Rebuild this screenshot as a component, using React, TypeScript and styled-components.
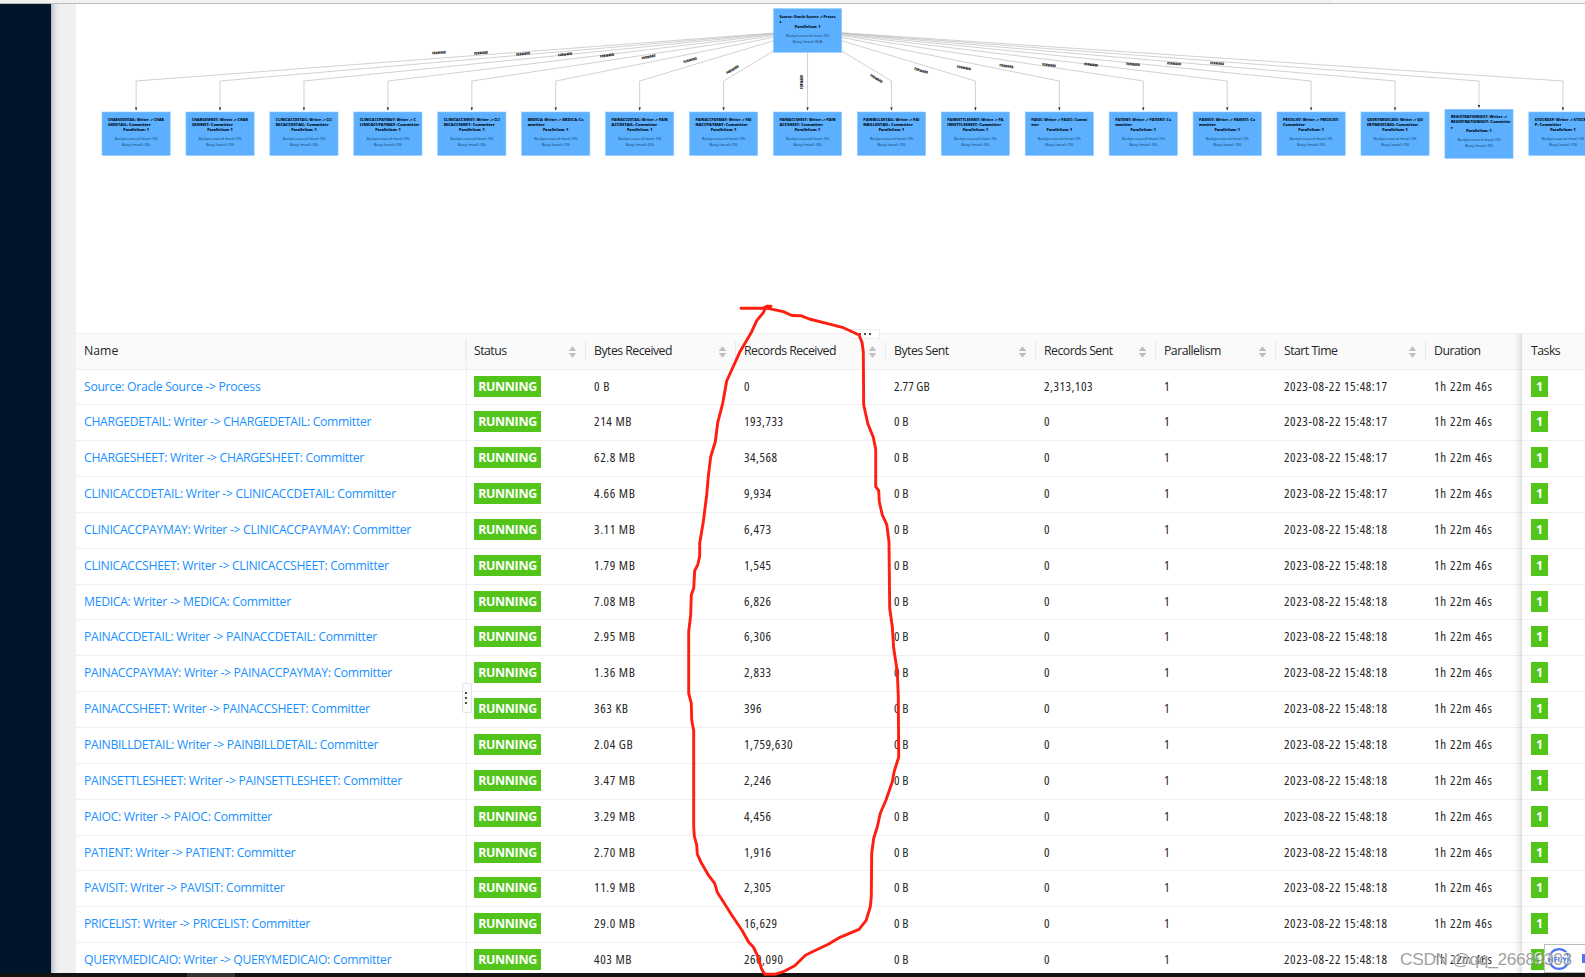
import React from "react";
import styled, { createGlobalStyle } from "styled-components";

const GlobalStyle = createGlobalStyle`
  * { box-sizing: border-box; }
  body { margin: 0; background: #fff; overflow: hidden; }
  body, button { font-family: "Open Sans", "Noto Sans", "Noto Sans CJK SC", sans-serif; }
`;

const Window = styled.div`
  position: relative;
  width: 1585px;
  height: 977px;
  display: flex;
  flex-direction: column;
  overflow: hidden;
`;
const TopEdge = styled.div`
  flex: 0 0 4px;
  background: linear-gradient(90deg, #f1f1f1 0 1331px, #f7f7f7 1331px);
  border-bottom: 1px solid #bdbdbd;
`;
const Main = styled.main`
  flex: 1;
  min-height: 0;
  display: flex;
`;
const Sidebar = styled.aside`
  flex: 0 0 51px;
  background: #001529;
`;
const Gutter = styled.div`
  flex: 0 0 25px;
  background: linear-gradient(90deg, #b4b8c1 0, #cfd1d6 2px, #e6e7e9 5px, #f0f0f0 9px);
`;
const Panel = styled.section`
  flex: 1;
  min-width: 0;
  overflow: hidden;
  background: #fff;
`;
const Graph = styled.svg`
  display: block;
  width: 1509px;
  height: 329px;
  font-family: "Open Sans", sans-serif;
`;
const Taskbar = styled.footer`
  flex: 0 0 4px;
  background: #121212;
`;
const TaskbarItem = styled.div`
  width: 48px;
  height: 4px;
  margin-left: 187px;
  background: #333;
`;

const columns = "391px 119px 150px 150px 150px 120px 120px 150px 96px 63px";

const HeaderRow = styled.div`
  display: grid;
  grid-template-columns: ${columns};
  height: 37px;
  background: #fafafa;
  border-top: 1px solid #f0f0f0;
  border-bottom: 1px solid #f0f0f0;
`;
const HeaderCell = styled.div<{ $divider?: boolean; $first?: boolean; $inset?: number }>`
  position: relative;
  display: flex;
  align-items: center;
  justify-content: space-between;
  padding: 0 9px 1px ${(p) => p.$inset ?? 8}px;
  color: #262626;
  font-size: 12.3px;
  line-height: 16px;
  letter-spacing: ${(p) => (p.$first ? 0 : -0.53)}px;
  white-space: nowrap;
  border-right: ${(p) => (p.$first ? "1px solid #f0f0f0" : "0")};
  &::after {
    content: "";
    display: ${(p) => (p.$divider ? "block" : "none")};
    position: absolute;
    right: 0;
    top: 7px;
    width: 1px;
    height: 20px;
    background: #ebebeb;
  }
`;
const SortIcon = styled.svg`
  width: 9px;
  height: 12px;
  margin-top: 1px;
  fill: #bfbfbf;
`;
const Row = styled.div<{ $short: boolean }>`
  display: grid;
  grid-template-columns: ${columns};
  height: ${(p) => (p.$short ? 35 : 36)}px;
  border-bottom: 1px solid #f0f0f0;
`;
const Cell = styled.div<{ $tracking?: number }>`
  padding: 6px 0 0 8px;
  color: #262626;
  font-size: 13px;
  line-height: 20px;
  font-stretch: 75%;
  letter-spacing: ${(p) => p.$tracking ?? 0.1}px;
  white-space: nowrap;
`;
const NameCell = styled(Cell)`
  border-right: 1px solid #f0f0f0;
`;
const StatusCell = styled(Cell)`
  padding-left: 7px;
`;
const JobLink = styled.a`
  color: #1890ff;
  font-size: 12.2px;
  font-stretch: 100%;
  letter-spacing: -0.3px;
`;
const pinned = `
  position: relative;
  padding-left: 9px;
  &::before {
    content: "";
    position: absolute;
    left: -8px;
    top: 0;
    bottom: -1px;
    width: 8px;
    background: linear-gradient(270deg, rgba(0, 0, 0, 0.12), rgba(0, 0, 0, 0.04) 4px, rgba(0, 0, 0, 0));
  }
`;
const PinnedHeader = styled(HeaderCell)`
  ${pinned}
`;
const PinnedCell = styled(Cell)`
  ${pinned}
`;
const Badge = styled.span<{ $width: number }>`
  display: flex;
  justify-content: center;
  width: ${(p) => p.$width}px;
  height: 21px;
  line-height: 21px;
  background: #52c41a;
  color: #fff;
  font-size: 12.4px;
  font-weight: 700;
  font-stretch: 100%;
  letter-spacing: -0.3px;
`;

const HandleH = styled.div`
  position: absolute;
  left: 850px;
  top: 329px;
  width: 30px;
  height: 10px;
  display: flex;
  align-items: center;
  justify-content: center;
  gap: 3px;
  background: #fff;
  border: 1px solid #ededed;
`;
const HandleV = styled(HandleH)`
  flex-direction: column;
  left: 462px;
  top: 683px;
  width: 10px;
  height: 30px;
  padding-right: 2px;
  background: #fafafa;
  border-color: #e4e4e4;
  border-radius: 2px;
`;
const Dot = styled.i`
  width: 2px;
  height: 2px;
  background: #4d4d4d;
`;
const Scribble = styled.svg`
  position: absolute;
  left: 0;
  top: 0;
  width: 1585px;
  height: 977px;
  pointer-events: none;
`;
const ImeBar = styled.div`
  position: absolute;
  left: 1544px;
  top: 944px;
  width: 50px;
  height: 29px;
  display: flex;
  align-items: center;
  gap: 11px;
  padding-left: 2px;
  background: #fff;
  border: 1px solid #bdbdbd;
`;
const ImeLogo = styled.svg`
  width: 24px;
  height: 24px;
  flex: none;
`;
const ImeMode = styled.div`
  width: 8px;
  height: 9px;
  background: #4f74f5;
`;
const Watermark = styled.div`
  position: absolute;
  left: 1400px;
  top: 948px;
  font: 17.3px/22px "Liberation Sans", sans-serif;
  letter-spacing: -0.3px;
  color: rgba(135, 135, 135, 0.8);
  text-shadow: -1px -1px 0 rgba(255, 255, 255, 0.75);
  white-space: nowrap;
`;

const T17 = "2023-08-22 15:48:17";
const T18 = "2023-08-22 15:48:18";
const writer = (n: string) => `${n}: Writer -> ${n}: Committer`;

type Job = [name: string, bytesIn: string, recordsIn: string, bytesOut: string, recordsOut: string, start: string];
const jobs: Job[] = [
  ["Source: Oracle Source -> Process", "0 B", "0", "2.77 GB", "2,313,103", T17],
  [writer("CHARGEDETAIL"), "214 MB", "193,733", "0 B", "0", T17],
  [writer("CHARGESHEET"), "62.8 MB", "34,568", "0 B", "0", T17],
  [writer("CLINICACCDETAIL"), "4.66 MB", "9,934", "0 B", "0", T17],
  [writer("CLINICACCPAYMAY"), "3.11 MB", "6,473", "0 B", "0", T18],
  [writer("CLINICACCSHEET"), "1.79 MB", "1,545", "0 B", "0", T18],
  [writer("MEDICA"), "7.08 MB", "6,826", "0 B", "0", T18],
  [writer("PAINACCDETAIL"), "2.95 MB", "6,306", "0 B", "0", T18],
  [writer("PAINACCPAYMAY"), "1.36 MB", "2,833", "0 B", "0", T18],
  [writer("PAINACCSHEET"), "363 KB", "396", "0 B", "0", T18],
  [writer("PAINBILLDETAIL"), "2.04 GB", "1,759,630", "0 B", "0", T18],
  [writer("PAINSETTLESHEET"), "3.47 MB", "2,246", "0 B", "0", T18],
  [writer("PAIOC"), "3.29 MB", "4,456", "0 B", "0", T18],
  [writer("PATIENT"), "2.70 MB", "1,916", "0 B", "0", T18],
  [writer("PAVISIT"), "11.9 MB", "2,305", "0 B", "0", T18],
  [writer("PRICELIST"), "29.0 MB", "16,629", "0 B", "0", T18],
  [writer("QUERYMEDICAIO"), "403 MB", "260,090", "0 B", "0", T18],
];

const headers = ["Status", "Bytes Received", "Records Received", "Bytes Sent", "Records Sent", "Parallelism", "Start Time"];

const vertices: string[][] = [
  ["CHARGEDETAIL: Writer -> CHAR", "GEDETAIL: Committer"],
  ["CHARGESHEET: Writer -> CHAR", "GESHEET: Committer"],
  ["CLINICACCDETAIL: Writer -> CLI", "NICACCDETAIL: Committer"],
  ["CLINICACCPAYMAY: Writer -> C", "LINICACCPAYMAY: Committer"],
  ["CLINICACCSHEET: Writer -> CLI", "NICACCSHEET: Committer"],
  ["MEDICA: Writer -> MEDICA: Co", "mmitter"],
  ["PAINACCDETAIL: Writer -> PAIN", "ACCDETAIL: Committer"],
  ["PAINACCPAYMAY: Writer -> PAI", "NACCPAYMAY: Committer"],
  ["PAINACCSHEET: Writer -> PAIN", "ACCSHEET: Committer"],
  ["PAINBILLDETAIL: Writer -> PAI", "NBILLDETAIL: Committer"],
  ["PAINSETTLESHEET: Writer -> PA", "INSETTLESHEET: Committer"],
  ["PAIOC: Writer -> PAIOC: Commi", "tter"],
  ["PATIENT: Writer -> PATIENT: Co", "mmitter"],
  ["PAVISIT: Writer -> PAVISIT: Co", "mmitter"],
  ["PRICELIST: Writer -> PRICELIST:", "Committer"],
  ["QUERYMEDICAIO: Writer -> QU", "ERYMEDICAIO: Committer"],
  ["REGISTRATIONOUT: Writer ->", "REGISTRATIONOUT: Committe", "r"],
  ["STOCKEXP: Writer -> STOCKEX", "P: Committer"],
];

const edgeLabels = [
  [439, 52.5], [481, 52.8], [523, 53.7], [565, 54.3], [607, 55.3], [648.5, 56.7], [690, 60], [732.5, 69.5], [802, 82],
  [876.5, 78.5], [921, 70.5], [964, 67.7], [1006.5, 66], [1049, 65], [1091, 64.5], [1133, 64.2], [1174, 63.5], [1217, 63.3],
];

const nodeX = (i: number) => 102 + i * 83.93;
const ROOT = { x: 807.6, y: 30.5 };
const BEND = 81;

function Vertex({ x, y, h, title, busy }: { x: number; y: number; h: number; title: string[]; busy: string }) {
  const extra = title.length > 2 ? 3 : 0;
  const mid = x + 34.1;
  return (
    <g>
      <rect x={x} y={y} width={68.2} height={h} fill="#5cb0ff" stroke="#8cc8ff" strokeWidth={0.6} />
      <g fontWeight={800} fill="#000c18" fontSize={3.9}>
        {title.map((t, k) => (
          <text key={k} x={x + 6} y={y + 9 + k * 5.1} textLength={k === 0 ? 56 : undefined} lengthAdjust="spacingAndGlyphs">
            {t}
          </text>
        ))}
        <text x={mid} y={y + 19.4 + extra} textAnchor="middle" fontSize={3.7}>Parallelism: 1</text>
      </g>
      <g fill="#123a66" fontSize={4} textAnchor="middle">
        <text x={mid} y={y + 28.4 + extra} textLength={43} lengthAdjust="spacingAndGlyphs">Backpressured (max): 0%</text>
        <text x={mid} y={y + 34.3 + extra}>Busy (max): {busy}</text>
      </g>
    </g>
  );
}

function JobGraph() {
  return (
    <Graph viewBox="76 4 1509 329">
      {vertices.map((v, i) => {
        const cx = nodeX(i) + 34.1;
        const tip = v.length > 2 ? 108 : 110.5;
        return (
          <g key={i}>
            <path d={`M${ROOT.x} ${ROOT.y}L${cx} ${BEND}V${tip}`} fill="none" stroke="#bdbdbd" strokeWidth={0.7} />
            <path d={`M${cx - 1.2} ${tip - 3}h2.4l-1.2 3z`} fill="#222" />
          </g>
        );
      })}
      {edgeLabels.map(([x, y], i) => {
        const dx = nodeX(i) + 34.1 - ROOT.x;
        const angle = i === 8 ? -90 : (Math.atan((BEND - ROOT.y) / dx) * 180) / Math.PI;
        return (
          <text key={i} transform={`translate(${x} ${y}) rotate(${angle})`} y={1.4} fontSize={3.6} fontWeight={800} fill="#000"
            textAnchor="middle" textLength={14} lengthAdjust="spacingAndGlyphs">
            FORWARD
          </text>
        );
      })}
      <Vertex x={773.5} y={8.7} h={43.6} title={["Source: Oracle Source -> Proces", "s"]} busy="N/A" />
      {vertices.map((v, i) => (
        <Vertex key={i} x={nodeX(i)} y={v.length > 2 ? 109.3 : 112} h={v.length > 2 ? 49 : 43.5} title={v} busy="0%" />
      ))}
    </Graph>
  );
}

function Sort() {
  return (
    <SortIcon viewBox="0 0 9 12">
      <path d="M4.5 0.2L8.3 5H.7zM4.5 11.8L8.3 7H.7z" />
    </SortIcon>
  );
}

const outline =
  "M741 308.3L768 308.3M763 308L767 306.3L771 306.3M768 308.3L783.3 311.7L792 315.5L800.7 315.7L809.3 319L826.7 323.3L843.3 327.7L850 330.7L859 335L862 342.3L863.3 351.7L863.7 405L868 424.3L873.3 437.3L875.7 449.3V486.7L878.7 490.7L879.3 501.7L882.3 515L886.7 524.3L889 541.7L889.7 608.3L892.3 626.7L893.7 648.3L897.3 671.7L898.3 696.7L898.7 757.3L894.3 771L892.3 781.7L886 800L880.3 813.3L877.3 826.7L873.7 838.3L871.7 853.3L871.3 896.7L870.3 906.7L866 920.7L859 929.3L840 937.3L828.3 944.3L816.7 949.7L805.7 955L794.7 965.7L783.3 971.7L775 974.3H764.7L761.7 969.3L758 956.7L753.3 947L748.7 942.3L742.3 930.7L731.7 915L717.3 892.3L714.7 883.3L708.3 875L700.7 861.7L697.3 854L696.7 845L694.3 836L693.7 826.7V730.7L691.7 720L691.3 703.3L688.7 693.3V631.7L690.7 615L691.3 595L693.7 588.3L694.7 570.7L697.7 565L699.7 556V543.3L703.3 521.7L706.7 495L708.3 476.7L710.7 456.7L715.3 441.7L717.7 422.7L722.7 403.3L726.7 381L740 351.7L751.7 331.7L756.7 320.7L763.3 312.7L766 307";

export default function App() {
  return (
    <Window>
      <GlobalStyle />
      <TopEdge />
      <Main>
        <Sidebar />
        <Gutter />
        <Panel>
          <JobGraph />
          <HeaderRow>
            <HeaderCell $first $divider>
              Name
            </HeaderCell>
            {headers.map((h) => (
              <HeaderCell key={h} $divider $inset={h === "Status" ? 7 : 8}>
                {h}
                <Sort />
              </HeaderCell>
            ))}
            <HeaderCell>Duration</HeaderCell>
            <PinnedHeader>Tasks</PinnedHeader>
          </HeaderRow>
          {jobs.map(([name, bytesIn, recordsIn, bytesOut, recordsOut, start], i) => (
            <Row key={name} $short={i === 0 || i === 6 || i === 13}>
              <NameCell>
                <JobLink>{name}</JobLink>
              </NameCell>
              <StatusCell>
                <Badge $width={67}>RUNNING</Badge>
              </StatusCell>
              <Cell $tracking={0.6}>{bytesIn}</Cell>
              <Cell $tracking={0.5}>{recordsIn}</Cell>
              <Cell>{bytesOut}</Cell>
              <Cell $tracking={0.5}>{recordsOut}</Cell>
              <Cell>1</Cell>
              <Cell $tracking={0.57}>{start}</Cell>
              <Cell $tracking={0.7}>1h 22m 46s</Cell>
              <PinnedCell>
                <Badge $width={17}>1</Badge>
              </PinnedCell>
            </Row>
          ))}
        </Panel>
      </Main>
      <Taskbar>
        <TaskbarItem />
      </Taskbar>
      <HandleH>
        <Dot />
        <Dot />
        <Dot />
      </HandleH>
      <HandleV>
        <Dot />
        <Dot />
        <Dot />
      </HandleV>
      <Scribble viewBox="0 0 1585 977">
        <path d={outline} fill="none" stroke="#ff1e0f" strokeWidth={2.9} strokeLinecap="round" strokeLinejoin="round" />
      </Scribble>
      <ImeBar>
        <ImeLogo viewBox="0 0 24 24">
          <circle cx="12" cy="12" r="9.8" fill="#fff" stroke="#4f74f5" strokeWidth="2.2" />
          <text x="12" y="14.8" textAnchor="middle" fontSize="7.5" fontWeight="800" fill="#4f74f5">iFLY</text>
        </ImeLogo>
        <ImeMode />
      </ImeBar>
      <Watermark>CSDN @qq_26689303</Watermark>
    </Window>
  );
}
